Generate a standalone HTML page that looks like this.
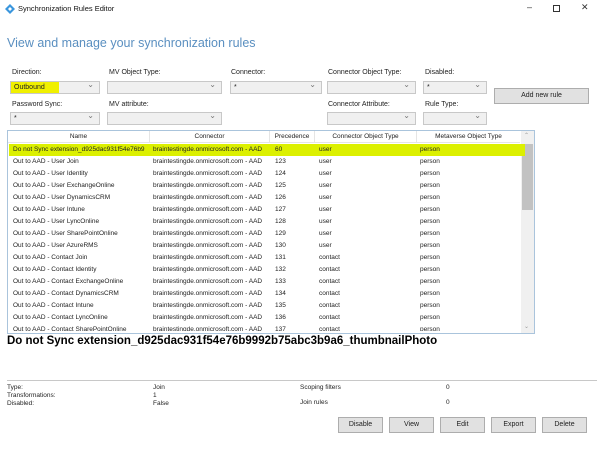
<!DOCTYPE html><html><head><style>
*{margin:0;padding:0;box-sizing:border-box}
body{width:600px;height:464px;background:#fff;font-family:"Liberation Sans",sans-serif;font-size:7px;color:#222;position:relative;overflow:hidden}
.a{position:absolute;white-space:nowrap}
.cb{position:absolute;height:13px;border:1px solid #c8c8c8;background:#f0f0f0;font-size:7px;padding:2px 3px}
.cb:after{content:"⌄";position:absolute;right:5px;top:-2px;color:#777;font-size:8px}
.btn{position:absolute;border:1px solid #adadad;background:#e1e1e1;text-align:center;font-size:7px;line-height:14px;height:16px}
.row{position:absolute;left:8px;width:512px;height:12px;line-height:12px;font-size:6.5px}
.row span{position:absolute}
</style></head><body>
<svg class="a" style="left:5px;top:4px" width="10" height="10"><path d="M5 0L10 5L5 10L0 5Z" fill="#3a96dd"/><path d="M5 3L7 5L5 7L3 5Z" fill="#fff"/></svg>
<div class="a" style="left:18px;top:4px;font-size:7.5px;color:#111">Synchronization Rules Editor</div>
<div class="a" style="left:527px;top:2px;font-size:9px;color:#333">–</div>
<div class="a" style="left:553px;top:5px;width:7px;height:7px;border:1px solid #333"></div>
<div class="a" style="left:581px;top:2px;font-size:9px;color:#333">✕</div>
<div class="a" style="left:7px;top:36px;font-size:12.5px;color:#5a8fc0">View and manage your synchronization rules</div>
<div class="a" style="left:12px;top:69px">Direction:</div>
<div class="a" style="left:109px;top:69px">MV Object Type:</div>
<div class="a" style="left:231px;top:69px">Connector:</div>
<div class="a" style="left:328px;top:69px">Connector Object Type:</div>
<div class="a" style="left:425px;top:69px">Disabled:</div>
<div class="cb" style="left:10px;top:81px;width:90px;background:linear-gradient(90deg,#f0f000 0,#f0f000 48px,#f0f0f0 48px)">Outbound</div>
<div class="cb" style="left:107px;top:81px;width:115px"></div>
<div class="cb" style="left:230px;top:81px;width:92px">*</div>
<div class="cb" style="left:327px;top:81px;width:89px"></div>
<div class="cb" style="left:423px;top:81px;width:64px">*</div>
<div class="btn" style="left:494px;top:88px;width:95px">Add new rule</div>
<div class="a" style="left:12px;top:101px">Password Sync:</div>
<div class="a" style="left:109px;top:101px">MV attribute:</div>
<div class="a" style="left:328px;top:101px">Connector Attribute:</div>
<div class="a" style="left:425px;top:101px">Rule Type:</div>
<div class="cb" style="left:10px;top:112px;width:90px">*</div>
<div class="cb" style="left:107px;top:112px;width:115px"></div>
<div class="cb" style="left:327px;top:112px;width:89px"></div>
<div class="cb" style="left:423px;top:112px;width:64px"></div>
<div class="a" style="left:7px;top:130px;width:528px;height:204px;border:1px solid #aac4dc"></div>
<div class="a" style="left:8px;top:131px;width:512px;height:12px;border-bottom:1px solid #e5e5e5;font-size:6.5px;line-height:12px">
<span class="a" style="left:0;width:142px;text-align:center;border-right:1px solid #e5e5e5">Name</span>
<span class="a" style="left:142px;width:120px;text-align:center;border-right:1px solid #e5e5e5">Connector</span>
<span class="a" style="left:262px;width:45px;text-align:center;border-right:1px solid #e5e5e5">Precedence</span>
<span class="a" style="left:307px;width:102px;text-align:center;border-right:1px solid #e5e5e5">Connector Object Type</span>
<span class="a" style="left:409px;width:103px;text-align:center">Metaverse Object Type</span></div>
<div class="a" style="left:521px;top:131px;width:13px;height:202px;background:#f0f0f0"></div>
<div class="a" style="left:522px;top:144px;width:11px;height:66px;background:#c2c2c2"></div>
<div class="a" style="left:524px;top:132px;font-size:6px;color:#999">⌃</div>
<div class="a" style="left:524px;top:323px;font-size:6px;color:#999">⌄</div>
<div class="a" style="left:9px;top:144px;width:516px;height:12px;background:#dcf000"></div>
<div id="rows"></div>
<div class="a" style="left:7px;top:335px;font-size:11.5px;font-weight:bold;color:#000">Do not Sync extension_d925dac931f54e76b9992b75abc3b9a6_thumbnailPhoto</div>
<div class="a" style="left:7px;top:380px;width:590px;border-top:1px solid #c8c8c8"></div>
<div class="a" style="left:7px;top:384px;line-height:8px;font-size:6.5px">Type:<br>Transformations:<br>Disabled:</div>
<div class="a" style="left:153px;top:384px;line-height:8px;font-size:6.5px">Join<br>1<br>False</div>
<div class="a" style="left:300px;top:384px;font-size:6.5px">Scoping filters</div>
<div class="a" style="left:300px;top:399px;font-size:6.5px">Join rules</div>
<div class="a" style="left:446px;top:384px;font-size:6.5px">0</div>
<div class="a" style="left:446px;top:399px;font-size:6.5px">0</div>
<div class="btn" style="left:338px;top:417px;width:45px">Disable</div>
<div class="btn" style="left:389px;top:417px;width:45px">View</div>
<div class="btn" style="left:440px;top:417px;width:45px">Edit</div>
<div class="btn" style="left:491px;top:417px;width:45px">Export</div>
<div class="btn" style="left:542px;top:417px;width:45px">Delete</div>
<script>
var d=[["Do not Sync extension_d925dac931f54e76b9","60","user"],["Out to AAD - User Join","123","user"],["Out to AAD - User Identity","124","user"],["Out to AAD - User ExchangeOnline","125","user"],["Out to AAD - User DynamicsCRM","126","user"],["Out to AAD - User Intune","127","user"],["Out to AAD - User LyncOnline","128","user"],["Out to AAD - User SharePointOnline","129","user"],["Out to AAD - User AzureRMS","130","user"],["Out to AAD - Contact Join","131","contact"],["Out to AAD - Contact Identity","132","contact"],["Out to AAD - Contact ExchangeOnline","133","contact"],["Out to AAD - Contact DynamicsCRM","134","contact"],["Out to AAD - Contact Intune","135","contact"],["Out to AAD - Contact LyncOnline","136","contact"],["Out to AAD - Contact SharePointOnline","137","contact"]];
var h="";d.forEach(function(r,i){var t=144+i*12;var hh=i==15?7:12;h+='<div class="row" style="top:'+t+'px;height:'+hh+'px;overflow:hidden"><span style="left:5px">'+r[0]+'</span><span style="left:145px">braintestingde.onmicrosoft.com - AAD</span><span style="left:267px">'+r[1]+'</span><span style="left:311px">'+r[2]+'</span><span style="left:412px">person</span></div>'});
document.getElementById("rows").innerHTML=h;
</script>
</body></html>
